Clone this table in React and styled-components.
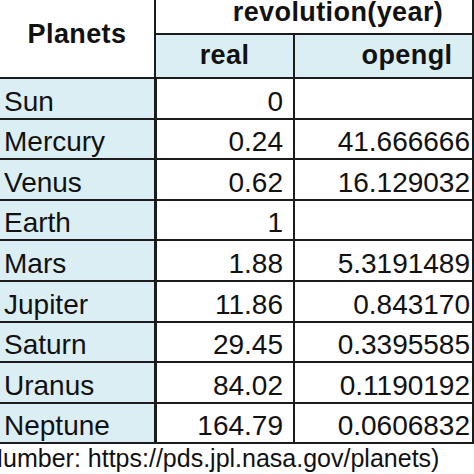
import React from "react";
import styled, { createGlobalStyle } from "styled-components";

const GlobalStyle = createGlobalStyle`
  html, body {
    margin: 0;
    padding: 0;
    background: #ffffff;
  }
  body {
    font-family: "Liberation Sans", Arial, sans-serif;
    color: #111;
    overflow: hidden;
  }
`;

const Page = styled.div`
  width: 474px;
  height: 474px;
  overflow: hidden;
  display: flex;
  flex-direction: column;
`;

const Table = styled.table`
  width: 473px;
  table-layout: fixed;
  border-collapse: collapse;
  margin-top: -2px;
`;

const Row = styled.tr`
  height: ${({ $h }) => $h}px;
`;

const HeadCell = styled.th`
  font-weight: 700;
  font-size: 27px;
  letter-spacing: 0.4px;
  line-height: 28px;
  padding: 0 0 ${({ $bottom }) => $bottom || 0}px ${({ $shift }) => $shift || 0}px;
  text-align: center;
  background: ${({ $shade }) => ($shade ? "#dbeef4" : "#ffffff")};
  border: 2px solid #1b1b1b;
  border-top: none;
  border-left: ${({ $first }) => ($first ? "none" : "2px solid #1b1b1b")};
  vertical-align: ${({ $align }) => $align || "middle"};
`;

const NameCell = styled.td`
  background: #dbeef4;
  font-size: 28px;
  line-height: 30px;
  text-align: left;
  padding: 0 0 1px 4px;
  vertical-align: bottom;
  border: 2px solid #1b1b1b;
  border-left: none;
  border-right-width: 3px;
`;

const ValueCell = styled.td`
  background: #ffffff;
  font-size: 28px;
  line-height: 30px;
  text-align: right;
  padding: 0 ${({ $pad }) => $pad}px 1px 0;
  vertical-align: bottom;
  border: 2px solid #1b1b1b;
`;

const Caption = styled.div`
  margin-top: 1px;
  margin-left: -15px;
  font-size: 25px;
  line-height: 26px;
  white-space: nowrap;
  color: #111;
`;

const planets = [
  { name: "Sun", real: "0", opengl: "" },
  { name: "Mercury", real: "0.24", opengl: "41.666666" },
  { name: "Venus", real: "0.62", opengl: "16.129032" },
  { name: "Earth", real: "1", opengl: "" },
  { name: "Mars", real: "1.88", opengl: "5.3191489" },
  { name: "Jupiter", real: "11.86", opengl: "0.843170" },
  { name: "Saturn", real: "29.45", opengl: "0.3395585" },
  { name: "Uranus", real: "84.02", opengl: "0.1190192" },
  { name: "Neptune", real: "164.79", opengl: "0.0606832" },
];

export default function App() {
  return (
    <Page>
      <GlobalStyle />
      <Table>
        <colgroup>
          <col style={{ width: 155 }} />
          <col style={{ width: 139 }} />
          <col style={{ width: 179 }} />
        </colgroup>
        <thead>
          <Row $h={35}>
            <HeadCell rowSpan={2} $first $bottom={7}>
              Planets
            </HeadCell>
            <HeadCell colSpan={2} $shift={48} $align="bottom" $bottom={7}>
              revolution(year)
            </HeadCell>
          </Row>
          <Row $h={44}>
            <HeadCell $shade $bottom={3}>
              real
            </HeadCell>
            <HeadCell $shade $shift={47} $bottom={3}>
              opengl
            </HeadCell>
          </Row>
        </thead>
        <tbody>
          {planets.map((p) => (
            <Row key={p.name} $h={40.6}>
              <NameCell>{p.name}</NameCell>
              <ValueCell $pad={10}>{p.real}</ValueCell>
              <ValueCell $pad={2}>{p.opengl}</ValueCell>
            </Row>
          ))}
        </tbody>
      </Table>
      <Caption>Number: https://pds.jpl.nasa.gov/planets)</Caption>
    </Page>
  );
}
